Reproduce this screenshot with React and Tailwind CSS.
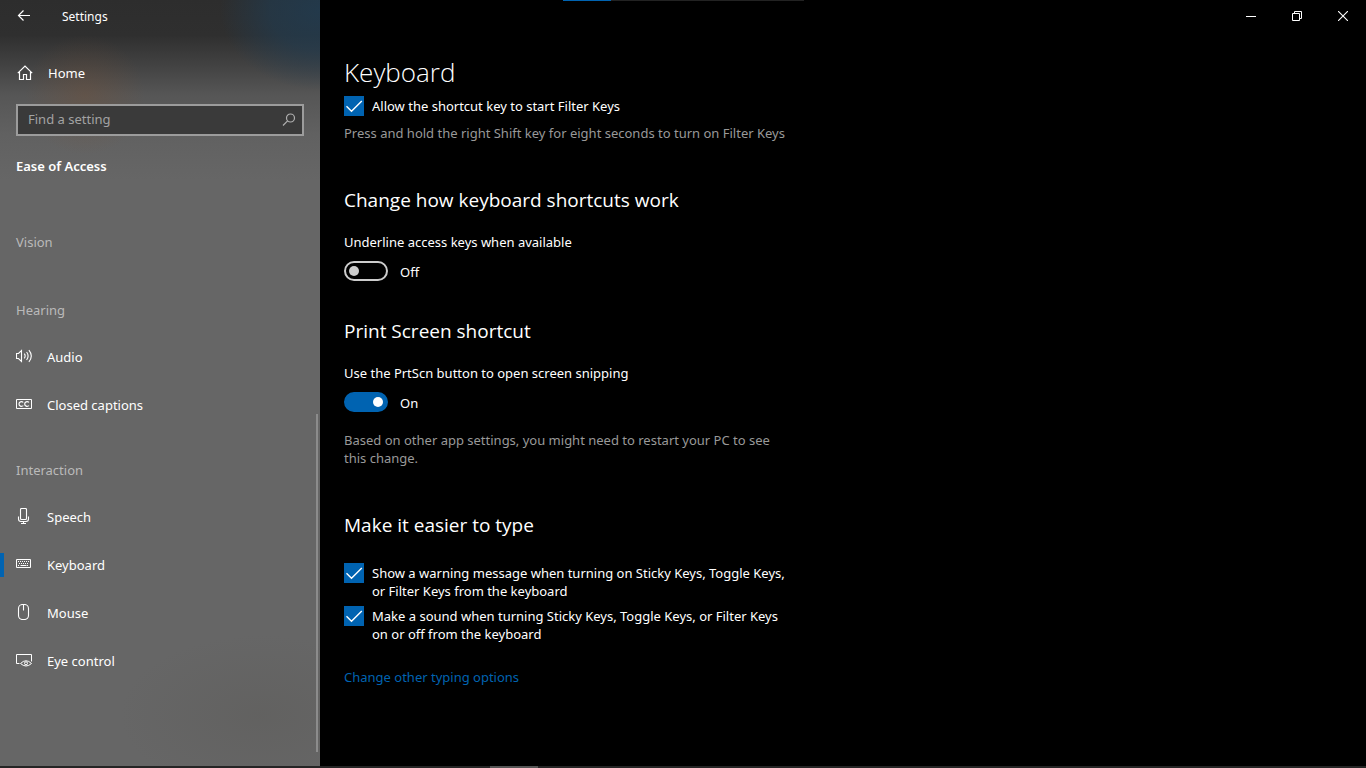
import { useState } from 'react';

const icons = {
  home: (
    <svg width="16" height="16" viewBox="0 0 16 16" fill="none" stroke="currentColor" strokeWidth="1.2" aria-hidden="true">
      <path d="M.8 8.200 8 1l7.200 7.200M2.500 7v7.500h4v-5h3v5h4V7" />
    </svg>
  ),
  audio: (
    <svg width="17" height="16" viewBox="0 0 17 16" fill="none" stroke="currentColor" strokeWidth="1.1" aria-hidden="true">
      <path d="M.5 5.500h2L5.500 2.500v11l-3-3h-2z" />
      <path d="M8.300 5.700q1.700 2.300 0 4.600M10.600 4q3 4 0 8M12.900 2.200q4.800 5.800 0 11.600" />
    </svg>
  ),
  captions: (
    <svg width="16" height="16" viewBox="0 0 16 16" fill="none" stroke="currentColor" aria-hidden="true">
      <path d="M.5 3.500h15v9H.5z" />
      <path strokeWidth="1.200" d="M7.300 6.400C5.500 5 3 5.900 3 8s2.500 3 4.300 1.600M13 6.400C11.200 5 8.700 5.900 8.700 8s2.500 3 4.300 1.600" />
    </svg>
  ),
  speech: (
    <svg width="16" height="16" viewBox="0 0 16 16" fill="none" stroke="currentColor" strokeWidth="1.100" aria-hidden="true">
      <rect x="4.500" y=".5" width="6" height="11" rx="1" />
      <path d="M2.500 8.500v2.500q0 2.500 2.500 2.500h5q2.500 0 2.500-2.500V8.500M7.500 13.500v2M5 15.500h5" />
    </svg>
  ),
  keyboard: (
    <svg width="16" height="16" viewBox="0 0 16 16" fill="none" stroke="currentColor" aria-hidden="true">
      <path d="M.5 3.500h14v8H.5z" />
      <path strokeDasharray="1 1" d="M2 5.500h11M3 7.500h10M2 9.500h2M11 9.500h2" />
      <path d="M4.500 9.500h6" />
    </svg>
  ),
  mouse: (
    <svg width="16" height="16" viewBox="0 0 16 16" fill="none" stroke="currentColor" strokeWidth="1.100" aria-hidden="true">
      <rect x="2.500" y=".5" width="10" height="15" rx="4" />
      <path d="M7.500.5v6" />
    </svg>
  ),
  eye: (
    <svg width="16" height="16" viewBox="0 0 16 16" fill="none" stroke="currentColor" aria-hidden="true">
      <path d="M3.500 11.500h-3v-9h15v7" />
      <path d="M4.500 11.500q5.500-5.500 11 0-5.500 5-11 0z" />
      <circle cx="10" cy="11.300" r="1.500" />
    </svg>
  ),
};

const groups = [
  { title: 'Vision', items: [] },
  {
    title: 'Hearing',
    items: [
      { label: 'Audio', icon: 'audio' },
      { label: 'Closed captions', icon: 'captions' },
    ],
  },
  {
    title: 'Interaction',
    items: [
      { label: 'Speech', icon: 'speech' },
      { label: 'Keyboard', icon: 'keyboard', active: true },
      { label: 'Mouse', icon: 'mouse' },
      { label: 'Eye control', icon: 'eye' },
    ],
  },
];

function NavItem({ label, icon, active }) {
  return (
    <a href="#" aria-current={active ? 'page' : undefined} className="relative flex h-12 items-center px-4 hover:bg-white/10">
      {active && <span className="absolute left-0 h-6 w-1 bg-[#0063b1]" />}
      <span className="mb-[2px] w-[31px]">{icons[icon]}</span>
      <span className="pt-[2px]">{label}</span>
    </a>
  );
}

function Sidebar() {
  return (
    <aside className="relative flex w-80 shrink-0 flex-col bg-[#666666] bg-[radial-gradient(ellipse_100px_80px_at_320px_10px,#203c52cc_0%,#203c5299_50%,#203c5200_100%),radial-gradient(ellipse_60px_60px_at_85px_95px,#7a4f3050_0%,#7a4f3000_100%),radial-gradient(ellipse_140px_80px_at_260px_715px,#5e5d5b80_0%,#5e5d5b00_100%),linear-gradient(#2d2d2d_0px,#2f2f2f_35px,#424242_65px,#565656_95px,#616161_135px,#666666_180px)]">
      <header className="flex h-8 items-center text-xs">
        <button type="button" aria-label="Back" className="flex h-8 w-12 items-center justify-center">
          <svg width="14" height="12" viewBox="0 0 14 12" fill="none" stroke="currentColor" strokeWidth="1.200" aria-hidden="true">
            <path d="M13 5.500H1.500M6.500.5l-5 5 5 5" />
          </svg>
        </button>
        <span className="pt-px pl-[14px]">Settings</span>
      </header>

      <a href="#" className="mt-[17px] flex h-12 items-center px-4 hover:bg-white/10">
        <span className="w-8 pl-px">{icons.home}</span>
        <span className="pt-[2px]">Home</span>
      </a>

      <form className="mx-4 mt-[7px] flex h-8 border-2 border-[#9c9c9c] bg-[#3a3a3a]" onSubmit={(e) => e.preventDefault()}>
        <input
          type="text"
          aria-label="Find a setting"
          placeholder="Find a setting"
          className="min-w-0 flex-1 bg-transparent pl-[10px] outline-none placeholder:text-[#a3a3a3]"
        />
        <button type="submit" aria-label="Search" className="flex w-[26px] items-center justify-center text-[#b0b0b0]">
          <svg width="14" height="14" viewBox="0 0 14 14" fill="none" stroke="currentColor" strokeWidth="1.200" aria-hidden="true">
            <circle cx="8.500" cy="5" r="4" />
            <path d="M5.600 7.900 1 12.500" />
          </svg>
        </button>
      </form>

      <h2 className="mt-5 mb-11 px-4 leading-5 font-semibold">Ease of Access</h2>

      <nav>
        {groups.map((group) => (
          <section key={group.title} className="pb-[19px]">
            <h3 className="mt-3 mb-[13px] px-4 leading-5 text-[#bababa]">{group.title}</h3>
            <div className="min-h-1">
              {group.items.map((item) => (
                <NavItem key={item.label} {...item} />
              ))}
            </div>
          </section>
        ))}
      </nav>

      <div className="absolute right-[2px] bottom-[14px] h-[338px] w-[2px] bg-[#8c8c8c]" />
    </aside>
  );
}

function CheckRow({ children }) {
  const [checked, setChecked] = useState(true);
  return (
    <label className="flex gap-2">
      <span className="grid h-5 w-5 shrink-0">
        <input
          type="checkbox"
          checked={checked}
          onChange={(e) => setChecked(e.target.checked)}
          className="col-start-1 row-start-1 h-5 w-5 appearance-none border-2 border-[#cccccc] checked:border-0 checked:bg-[#0063b1]"
        />
        {checked && (
          <svg className="pointer-events-none col-start-1 row-start-1" width="20" height="20" viewBox="0 0 20 20" fill="none" stroke="white" strokeWidth="1.400" aria-hidden="true">
            <path d="M2.500 10.200 7.500 15.200 17.800 4.900" />
          </svg>
        )}
      </span>
      <span className="pt-px">{children}</span>
    </label>
  );
}

function Toggle({ label, defaultOn }) {
  const [on, setOn] = useState(defaultOn);
  return (
    <label className="mt-[19px] block">
      {label}
      <span className="mt-[10px] flex h-5 items-center gap-3">
        <input
          type="checkbox"
          role="switch"
          checked={on}
          onChange={(e) => setOn(e.target.checked)}
          className="flex h-5 w-11 appearance-none items-center rounded-full border-2 border-[#cccccc] px-[3px] before:h-[10px] before:w-[10px] before:rounded-full before:bg-[#cccccc] checked:justify-end checked:border-[#0063b1] checked:bg-[#0063b1] checked:before:bg-white"
        />
        <span className="pt-[2px]">{on ? 'On' : 'Off'}</span>
      </span>
    </label>
  );
}

function WindowControls() {
  return (
    <div className="flex h-8 justify-end">
      <button type="button" aria-label="Minimize" className="flex w-[46px] items-center justify-center hover:bg-white/10">
        <svg width="10" height="10" viewBox="0 0 10 10" stroke="currentColor" aria-hidden="true">
          <path d="M0 5.500h10" />
        </svg>
      </button>
      <button type="button" aria-label="Restore" className="flex w-[46px] items-center justify-center hover:bg-white/10">
        <svg width="10" height="10" viewBox="0 0 10 10" fill="none" stroke="currentColor" aria-hidden="true">
          <path d="M.5 2.500h7v7h-7zM2.500 2.500v-2h7v7h-2" />
        </svg>
      </button>
      <button type="button" aria-label="Close" className="flex w-[46px] items-center justify-center hover:bg-red-600">
        <svg width="10" height="10" viewBox="0 0 10 10" stroke="currentColor" strokeWidth="1.100" aria-hidden="true">
          <path d="m0 0 10 10M10 0 0 10" />
        </svg>
      </button>
    </div>
  );
}

export default function App() {
  return (
    <div className="flex min-h-screen flex-col bg-black font-['Noto_Sans',sans-serif] text-[13px] text-white">
      <div className="flex flex-1">
        <Sidebar />

        <main className="relative flex-1 leading-[18px]">
          <div className="absolute top-0 left-[243px] flex h-px w-[241px] bg-[#222222]">
            <span className="w-12 bg-[#0063b1]" />
          </div>
          <WindowControls />

          <div className="max-w-[496px] px-6 pt-[22px]">
            <h1 className="mb-[6px] font-['Open_Sans',sans-serif] text-[26px] leading-9 font-light">Keyboard</h1>
            <CheckRow>Allow the shortcut key to start Filter Keys</CheckRow>
            <p className="mt-2 text-[#999999]">Press and hold the right Shift key for eight seconds to turn on Filter Keys</p>

            <h2 className="mt-11 font-['Open_Sans',sans-serif] text-[19px] leading-7">Change how keyboard shortcuts work</h2>
            <Toggle label="Underline access keys when available" defaultOn={false} />

            <h2 className="mt-9 font-['Open_Sans',sans-serif] text-[19px] leading-7">Print Screen shortcut</h2>
            <Toggle label="Use the PrtScn button to open screen snipping" defaultOn={true} />
            <p className="mt-[19px] text-[#999999]">
              Based on other app settings, you might need to restart your PC to see this change.
            </p>

            <h2 className="mt-11 mb-6 font-['Open_Sans',sans-serif] text-[19px] leading-7">Make it easier to type</h2>
            <div className="flex flex-col gap-[6px]">
              <CheckRow>Show a warning message when turning on Sticky Keys, Toggle Keys, or Filter Keys from the keyboard</CheckRow>
              <CheckRow>Make a sound when turning Sticky Keys, Toggle Keys, or Filter Keys on or off from the keyboard</CheckRow>
            </div>
            <a href="#" className="mt-[25px] inline-block text-[#0063b1] hover:text-[#999999]">
              Change other typing options
            </a>
          </div>
        </main>
      </div>

      <footer className="flex h-[2px] bg-[#252525]">
        <span className="ml-[490px] w-12 bg-[#555555]" />
      </footer>
    </div>
  );
}
